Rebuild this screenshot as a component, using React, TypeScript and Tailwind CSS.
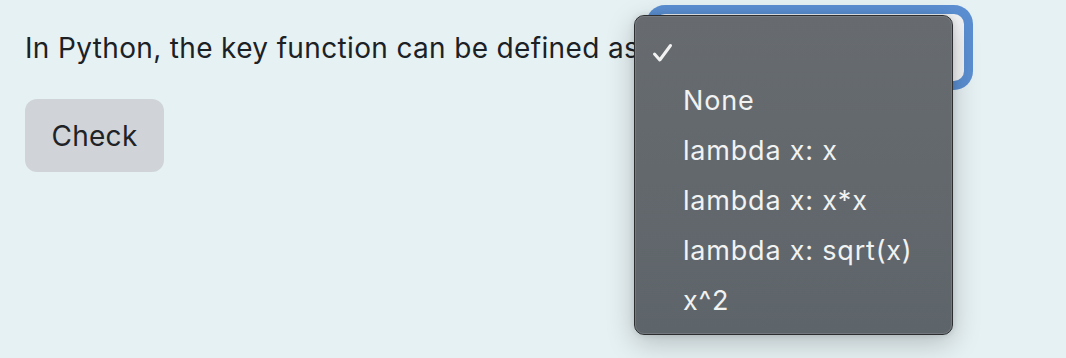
import { useState } from 'react'

const options = ['None', 'lambda x: x', 'lambda x: x*x', 'lambda x: sqrt(x)', 'x^2']

function SelectMenu({ selected }: { selected: string }) {
  return (
    <div className="absolute left-[-21px] top-[1px] z-10 w-[319px] h-[320px] rounded-[10px] border border-[#2c2e30] bg-gradient-to-b from-[#676b6f] to-[#5e656a] shadow-[0_8px_28px_rgba(0,0,0,0.22),0_0_6px_rgba(0,0,0,0.12)]">
      <div className="h-full w-full rounded-[9px] border border-[#80858a]/60 pt-[20px]">
        <div className="flex h-[32px] items-center pl-[16px]">
          {selected === '' && (
            <svg width="21" height="20" viewBox="0 0 21 20" fill="none">
              <path d="M2.5 11 L7.8 17 L18.5 2.5" stroke="#f2f2f2" strokeWidth="3" strokeLinecap="round" strokeLinejoin="round" />
            </svg>
          )}
        </div>
        <div className="mt-[6px]">
          {options.map((o) => (
            <div key={o} className="flex h-[50px] items-center pl-[47px] text-[27px] leading-none tracking-[0.8px] text-[#f1f2f2]">
              {o}
            </div>
          ))}
        </div>
      </div>
    </div>
  )
}

export default function App() {
  const [value] = useState('')

  return (
    <div className="min-h-[358px] w-full bg-[#e6f1f3] pl-[25px] pt-[13px] font-['Inter','Liberation_Sans',sans-serif] text-[#1c2126]">
      <div className="flex items-center">
        <span className="w-[630px] shrink-0 pt-[2px] text-[28px] leading-[67px] tracking-[0.35px] whitespace-nowrap">
          In Python, the key function can be defined as
        </span>
        <div className="relative">
          <div className="h-[67px] w-[309px] rounded-[10px] bg-[#f2f3f4] shadow-[0_0_0_9px_#5b8fd2]" />
          <SelectMenu selected={value} />
        </div>
      </div>
      <button className="mt-[17px] h-[73px] w-[139px] rounded-[12px] bg-[#d0d4d9] text-[28px] tracking-[0.3px] text-[#1f2327]">
        Check
      </button>
    </div>
  )
}
